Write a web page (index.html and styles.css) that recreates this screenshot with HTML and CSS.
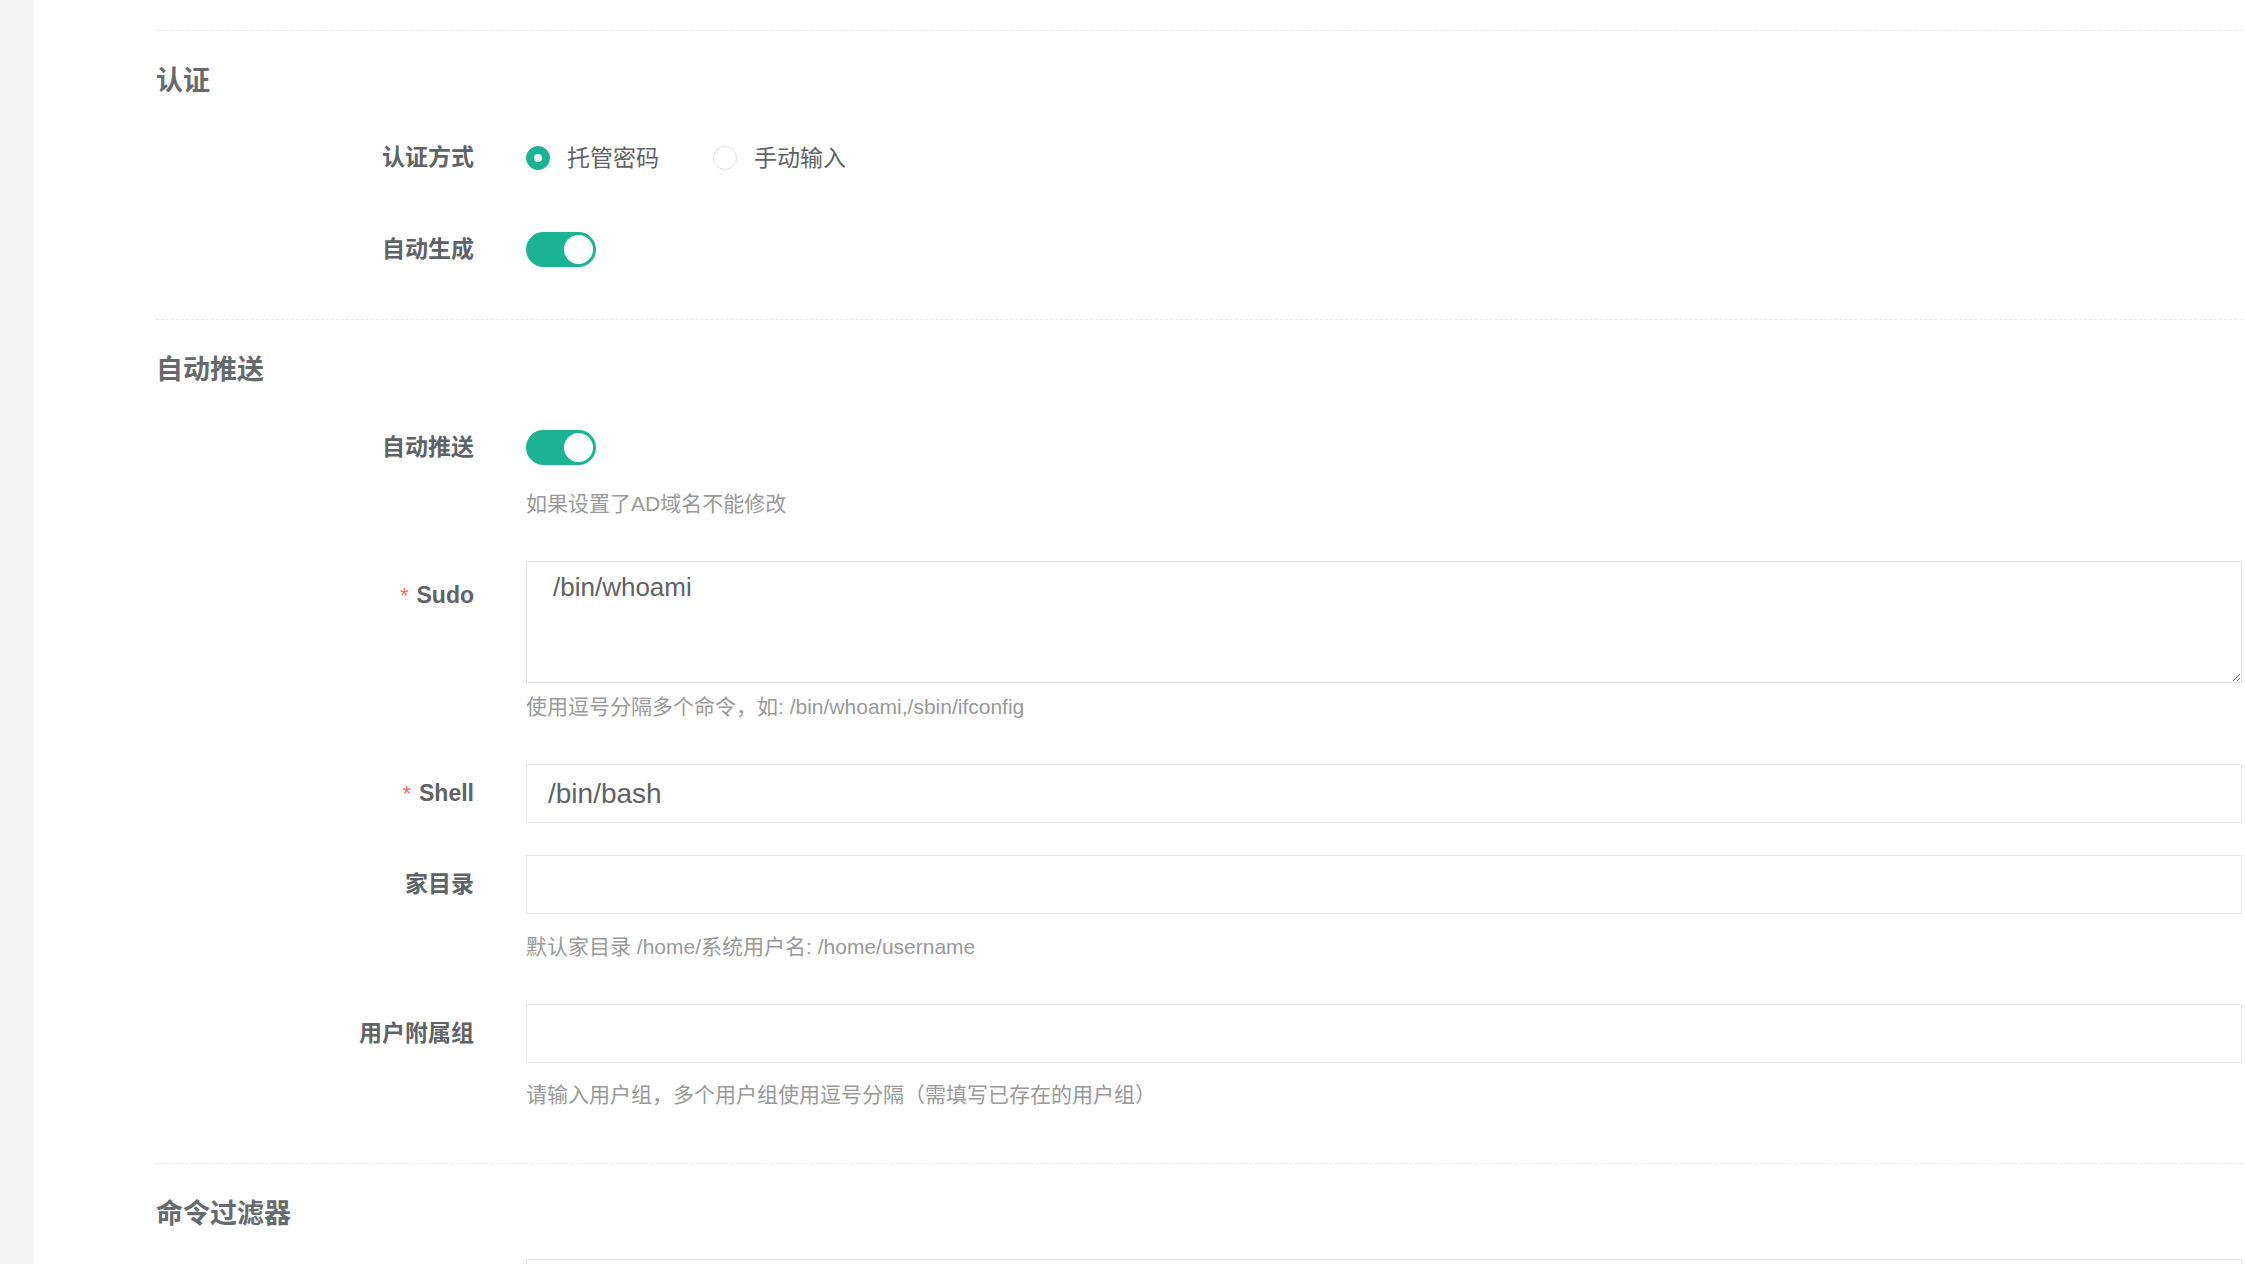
FILE: index.html
```html
<!DOCTYPE html>
<html lang="zh-CN">
<head>
<meta charset="utf-8">
<title>系统用户</title>
<link rel="stylesheet" href="styles.css">
</head>
<body>
<div class="page">
  <div class="edge"></div>
  <main class="content">
    <section class="section sec-first">
      <h3 class="section-title title-first">认证</h3>
      <div class="form-item item-wide">
        <label class="label">认证方式</label>
        <div class="control">
          <div class="line">
            <span class="radio checked"><span class="radio-dot"></span>托管密码</span>
            <span class="radio"><span class="radio-dot"></span>手动输入</span>
          </div>
        </div>
      </div>
      <div class="form-item">
        <label class="label">自动生成</label>
        <div class="control">
          <div class="line"><span class="switch"><span class="knob"></span></span></div>
        </div>
      </div>
    </section>

    <section class="section sec-push">
      <h3 class="section-title">自动推送</h3>
      <div class="form-item">
        <label class="label">自动推送</label>
        <div class="control">
          <div class="line"><span class="switch"><span class="knob"></span></span></div>
          <div class="help help-switch">如果设置了AD域名不能修改</div>
        </div>
      </div>
      <div class="form-item">
        <label class="label label-area"><span class="req">*</span>Sudo</label>
        <div class="control">
          <textarea class="textarea">/bin/whoami</textarea>
          <div class="help help-area">使用逗号分隔多个命令，如: /bin/whoami,/sbin/ifconfig</div>
        </div>
      </div>
      <div class="form-item">
        <label class="label"><span class="req">*</span>Shell</label>
        <div class="control">
          <input class="input" type="text" value="/bin/bash">
        </div>
      </div>
      <div class="form-item">
        <label class="label">家目录</label>
        <div class="control">
          <input class="input" type="text" value="">
          <div class="help">默认家目录 /home/系统用户名: /home/username</div>
        </div>
      </div>
      <div class="form-item">
        <label class="label">用户附属组</label>
        <div class="control">
          <input class="input" type="text" value="">
          <div class="help help-tight">请输入用户组，多个用户组使用逗号分隔（需填写已存在的用户组）</div>
        </div>
      </div>
    </section>

    <section class="section">
      <h3 class="section-title title-last">命令过滤器</h3>
      <div class="form-item">
        <label class="label"></label>
        <div class="control">
          <input class="input" type="text" value="">
        </div>
      </div>
    </section>
  </main>
</div>
</body>
</html>
```

FILE: styles.css
```css
html, body {
  margin: 0;
  padding: 0;
  background: #ffffff;
}

body {
  font-family: "Liberation Sans", "Noto Sans CJK SC", sans-serif;
  color: #606266;
}

.page {
  display: flex;
  height: 1264px;
  overflow: hidden;
}

.edge {
  flex: none;
  width: 34px;
  background: #f3f3f4;
}

.content {
  flex: 1;
  min-width: 0;
  padding: 30px 3px 0 122px;
}

.section {
  border-top: 1px dashed #e7eaec;
  padding: 30px 0 8px;
}

.sec-push {
  padding-bottom: 11px;
}

.section-title {
  margin: 0 0 28px;
  font-size: 27px;
  line-height: 40px;
  font-weight: 700;
  color: #676a6c;
}

.title-first {
  margin-bottom: 27px;
}

.title-last {
  margin-bottom: 25px;
}

.form-item {
  display: flex;
  margin-bottom: 32px;
}

.item-wide {
  margin-bottom: 33px;
}

.label {
  flex: none;
  width: 370px;
  box-sizing: border-box;
  padding-right: 52px;
  text-align: right;
  font-size: 23px;
  font-weight: 700;
  line-height: 59px;
  color: #5f6266;
}

.label-area {
  padding-top: 5px;
}

.req {
  color: #f56c6c;
  font-size: 22px;
  font-weight: 400;
  margin-right: 8px;
}

.control {
  flex: 1;
  min-width: 0;
}

.line {
  height: 59px;
  display: flex;
  align-items: center;
}

.radio {
  display: inline-flex;
  align-items: center;
  margin-right: 54px;
  font-size: 23px;
  line-height: 30px;
  color: #606266;
}

.radio-dot {
  width: 24px;
  height: 24px;
  box-sizing: border-box;
  border-radius: 50%;
  border: 1px solid #dcdfe6;
  background: #ffffff;
  margin-right: 17px;
  display: flex;
  align-items: center;
  justify-content: center;
}

.radio.checked .radio-dot {
  background: #1ab394;
  border-color: #1ab394;
}

.radio.checked .radio-dot::after {
  content: "";
  width: 8px;
  height: 8px;
  border-radius: 50%;
  background: #ffffff;
}

.switch {
  width: 70px;
  height: 35px;
  box-sizing: border-box;
  border-radius: 18px;
  background: #1ab394;
  display: flex;
  align-items: center;
  justify-content: flex-end;
  padding: 0 3px;
}

.knob {
  width: 29px;
  height: 29px;
  border-radius: 50%;
  background: #ffffff;
}

.help {
  font-size: 21px;
  line-height: 30px;
  color: #999999;
  margin: 18px 0 10px;
}

.help-switch {
  margin-top: 12px;
}

.help-area {
  margin-top: 9px;
}

.help-tight {
  margin-top: 17px;
}

.textarea {
  display: block;
  width: 100%;
  height: 122px;
  box-sizing: border-box;
  border: 1px solid #dcdfe6;
  border-radius: 0;
  padding: 6px 26px;
  font-family: "Liberation Sans", "Noto Sans CJK SC", sans-serif;
  font-size: 26px;
  line-height: 1.5;
  color: #5f6266;
  resize: vertical;
  outline: none;
}

.input {
  display: block;
  width: 100%;
  height: 59px;
  box-sizing: border-box;
  border: 1px solid #e5e6e7;
  border-radius: 0;
  padding: 0 21px;
  font-family: "Liberation Sans", "Noto Sans CJK SC", sans-serif;
  font-size: 28px;
  color: #5f6266;
  outline: none;
  background: #ffffff;
}
```
